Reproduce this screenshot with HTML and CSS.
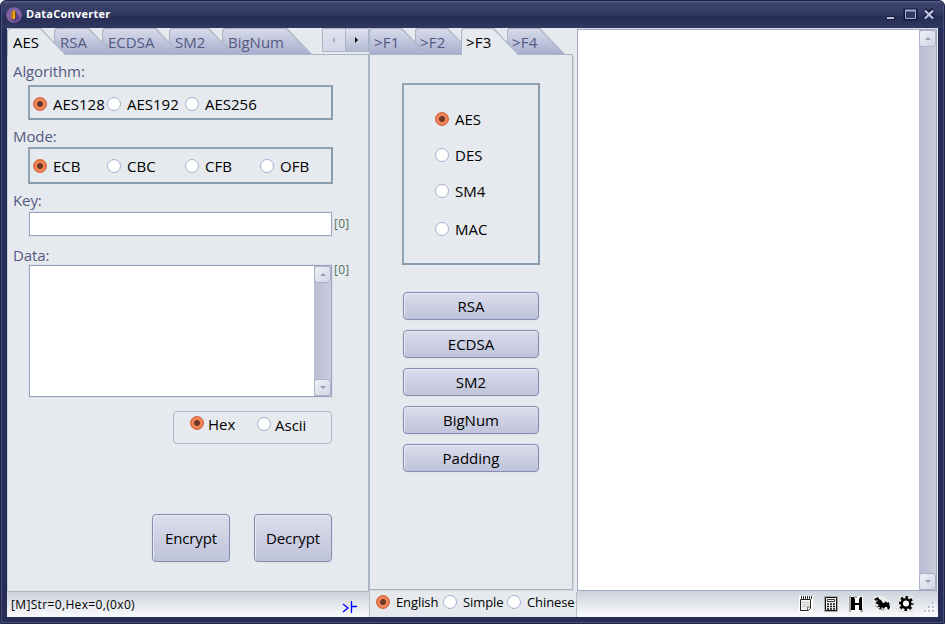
FILE: index.html
```html
<!DOCTYPE html>
<html lang="en">
<head>
    <meta charset="UTF-8">
    <title>DataConverter</title>
    <link rel="stylesheet" href="styles.css">
</head>
<body>
    <div class="window">
        <header class="titlebar">
            <svg class="logo" width="16" height="16" viewBox="0 0 16 16">
                <circle cx="8" cy="8" r="7.8" fill="#8262a4"/>
                <path d="M9 4l5 7-5 4-5-3z" fill="#56418a"/>
                <path d="M5 5l2-1v8H5z" fill="#b87b16"/>
                <path d="M7 4l2-1v9H7z" fill="#f0a51e"/>
                <path d="M9 4l1 1v6l-1 1z" fill="#654916"/>
            </svg>
            <span class="title">DataConverter</span>
            <svg class="controls" width="56" height="16" viewBox="0 0 56 16">
                <g fill="none" stroke="#151b3d" stroke-width="4">
                    <path d="M3 11h8M21.500 3.500h10v8h-10zM41 2.500l8 8M49 2.500l-8 8"/>
                </g>
                <path d="M3 11h7" stroke="#b9bfdc" stroke-width="2"/>
                <path d="M21.500 3.500h10v8h-10z" fill="#303961" stroke="#a9afd0"/>
                <path d="M21 3.500h11" stroke="#a9afd0" stroke-width="2"/>
                <path d="M41 3.500l8 8M49 3.500l-8 8" stroke="#c1c6df" stroke-width="2.200"/>
            </svg>
        </header>

        <main class="content">
            <section class="left">
                <nav class="tabs">
                    <div class="tab active w47"><span>AES</span></div>
                    <div class="tab w48"><span>RSA</span></div>
                    <div class="tab w67"><span>ECDSA</span></div>
                    <div class="tab w53"><span>SM2</span></div>
                    <div class="tab w78"><span>BigNum</span></div>
                    <div class="tab-scroll">
                        <i class="arrow prev"></i>
                        <i class="arrow next"></i>
                    </div>
                </nav>
                <div class="form">
                    <div class="label">Algorithm:</div>
                    <div class="group algorithm">
                        <div class="radio checked">AES128</div>
                        <div class="radio">AES192</div>
                        <div class="radio">AES256</div>
                    </div>
                    <div class="label mode-label">Mode:</div>
                    <div class="group mode">
                        <div class="radio checked">ECB</div>
                        <div class="radio">CBC</div>
                        <div class="radio">CFB</div>
                        <div class="radio">OFB</div>
                    </div>
                    <div class="label key-label">Key:</div>
                    <div class="field-row">
                        <div class="field key"></div>
                        <span class="count">[0]</span>
                    </div>
                    <div class="label data-label">Data:</div>
                    <div class="field-row data-row">
                        <div class="field data">
                            <div class="scrollbar"><b class="up"></b><b class="down"></b></div>
                        </div>
                        <span class="count">[0]</span>
                    </div>
                    <div class="format">
                        <div class="radio checked">Hex</div>
                        <div class="radio ascii">Ascii</div>
                    </div>
                    <div class="actions">
                        <div class="button">Encrypt</div>
                        <div class="button">Decrypt</div>
                    </div>
                </div>
                <footer class="status">
                    <span>[M]Str=0,Hex=0,(0x0)</span>
                    <svg width="16" height="14" viewBox="0 0 16 14" fill="none" stroke="#0000ff" stroke-width="1.3">
                        <path d="M1 4l5 4-5 4M9.500 1v12M10 6.500h5"/>
                    </svg>
                </footer>
            </section>

            <section class="middle">
                <nav class="tabs">
                    <div class="tab w46"><span>&gt;F1</span></div>
                    <div class="tab w46"><span>&gt;F2</span></div>
                    <div class="tab active w46"><span>&gt;F3</span></div>
                    <div class="tab w46"><span>&gt;F4</span></div>
                </nav>
                <div class="tools">
                    <div class="group ciphers">
                        <div class="radio checked">AES</div>
                        <div class="radio">DES</div>
                        <div class="radio">SM4</div>
                        <div class="radio mac">MAC</div>
                    </div>
                    <div class="tool-buttons">
                        <div class="button">RSA</div>
                        <div class="button">ECDSA</div>
                        <div class="button">SM2</div>
                        <div class="button">BigNum</div>
                        <div class="button">Padding</div>
                    </div>
                </div>
                <footer class="language">
                    <div class="radio checked">English</div>
                    <div class="radio">Simple</div>
                    <div class="radio">Chinese</div>
                </footer>
            </section>

            <section class="right">
                <div class="output">
                    <div class="scrollbar"><b class="up"></b><b class="down"></b></div>
                </div>
                <footer class="toolbar">
                    <svg width="16" height="16" viewBox="0 0 16 16">
                        <path d="M0 0h14v16H0z" fill="#fff"/>
                        <path d="M1.500 3.500h10v9l-2 2h-8z" fill="#f4f4f4" stroke="#222"/>
                        <path d="M2 1.500h11" stroke="#111" stroke-width="2.500" stroke-dasharray="1 1"/>
                        <path d="M3 6.500h7M3 8.500h7M3 10.500h7" stroke="#c6c6c6"/>
                        <path d="M8.500 14v-3h3" fill="none" stroke="#777"/>
                    </svg>
                    <svg width="16" height="16" viewBox="0 0 16 16">
                        <path d="M0 0h14v16H0z" fill="#aaa"/>
                        <path d="M1.500 1.500h11v13h-11z" fill="#f2f2f2" stroke="#111"/>
                        <path d="M3.500 3.500h7v2h-7z" fill="#fff" stroke="#333"/>
                        <path d="M3 8h8M3 10.500h8M3 13h8" stroke="#111" stroke-width="1.600" stroke-dasharray="2 1"/>
                    </svg>
                    <svg width="16" height="16" viewBox="0 0 16 16">
                        <path d="M0 0h14v16H0z" fill="#fff"/>
                        <path d="M0 0h2v16H0zM11 13h3v3h-3zM5 0h3v2H5z" fill="#aaa"/>
                        <path d="M2 1h3v1.500h1V7h4V2.500h1V1h2v13h-3V9H6v5H2z" fill="#000"/>
                    </svg>
                    <svg width="16" height="16" viewBox="0 0 16 16">
                        <path d="M0 0h8l8 5v11H6L0 10z" fill="#eee"/>
                        <path d="M0 3l2-1 2-1 1 2 2 1 2 3 1 0 2-2 1 2 2-1 1 6-2 2-1-3-2 0-1 2-2-2-1 3-2-1 1-2-3 0 2-2-4-2 2-1z" fill="#000"/>
                        <path d="M1 9l4 4 5 1M2 4l2 1" stroke="#999" fill="none"/>
                    </svg>
                    <svg width="16" height="16" viewBox="0 0 16 16">
                        <path d="M0 0h14v16H0z" fill="#e4e4e4"/>
                        <circle cx="7" cy="7.500" r="5.800" fill="none" stroke="#000" stroke-width="3.400" stroke-dasharray="2.278 2.278" stroke-dashoffset="1.100"/>
                        <circle cx="7" cy="7.500" r="4.300" fill="#fff" stroke="#000" stroke-width="2.500"/>
                    </svg>
                    <svg class="grip" width="12" height="12" viewBox="0 0 12 12">
                        <path d="M8 0h3v3H8zM4 4h3v3H4zM8 4h3v3H8zM0 8h3v3H0zM4 8h3v3H4zM8 8h3v3H8z" fill="#fff"/>
                        <path d="M8 0h2v2H8zM4 4h2v2H4zM8 4h2v2H8zM0 8h2v2H0zM4 8h2v2H4zM8 8h2v2H8z" fill="#b9c0d2"/>
                    </svg>
                </footer>
            </section>
        </main>
    </div>
</body>
</html>
```
FILE: styles.css
```css
*,
*::before,
*::after {
    box-sizing: border-box;
}

body {
    margin: 0;
    background: #fff;
    color: #000;
    font-family: "Open Sans", "Noto Sans", sans-serif;
    font-size: 15px;
}

.window {
    width: 945px;
    height: 624px;
    padding: 0 6px 6px;
    background: #262e57;
    border: 1px solid #1c2347;
    border-radius: 6px 6px 0 0;
    box-shadow: inset 0 0 0 1px #464f7c;
}

.titlebar {
    display: flex;
    align-items: center;
    height: 27px;
    margin: 0 -5px;
    padding: 0 3px 0 4px;
    background: linear-gradient(#565e87, #384069 3px, #363e67 10px, #262e57 17px, #30385f);
    border-radius: 5px 5px 0 0;
}

.title {
    flex: 1;
    margin: -2px 0 0 4px;
    color: #fff;
    font-size: 11px;
    font-weight: bold;
    letter-spacing: 0.25px;
}

.content {
    display: grid;
    grid-template-columns: 362px 208px 361px;
    height: 589px;
    background: #e6eaef;
}

.left,
.middle,
.right {
    display: flex;
    flex-direction: column;
}

/* slanted tabs, each one overlaps the next */
.tabs {
    display: flex;
    position: relative;
    z-index: 0;
    height: 27px;
    flex: none;
    border-bottom: 1px solid #a9b5c3;
}

.tab {
    position: relative;
    height: 26px;
    color: #535a7f;
    line-height: 28px;
}

.tab span {
    position: relative;
    z-index: 2;
    margin-left: 6px;
}

.tab::before,
.tab::after {
    content: "";
    position: absolute;
    top: 0;
    left: 0;
    right: -12px;
    bottom: 0;
    background: #a9b5c3;
    clip-path: polygon(0 2px, 2px 0, calc(100% - 25px) 0, 100% 100%, 0 100%);
}

.tab::after {
    top: 1px;
    left: 1px;
    right: -11px;
    background: linear-gradient(#d7daea, #a9b0d0);
}

.tab:nth-child(1) { z-index: 5; }
.tab:nth-child(2) { z-index: 4; }
.tab:nth-child(3) { z-index: 3; }
.tab:nth-child(4) { z-index: 2; }
.tab:nth-child(5) { z-index: 1; }

.tab.active {
    z-index: 6;
    height: 27px;
    color: #000;
}

.tab.active::after {
    background: #e6eaef;
}

.w46 { width: 46px; }
.w47 { width: 47px; }
.w48 { width: 48px; }
.w53 { width: 53px; }
.w67 { width: 67px; }
.w78 { width: 78px; }

.tab-scroll {
    display: flex;
    width: 47px;
    height: 24px;
    margin-left: auto;
    border: 1px solid #a9b5c3;
}

.arrow {
    display: flex;
    flex: 1;
    align-items: center;
    justify-content: center;
    padding-right: 1px;
    background: linear-gradient(#e1e4ef, #d2d6e7);
}

.arrow::before {
    content: "";
    border: 3px solid transparent;
}

.prev::before {
    border-right-color: #a3afbf;
    border-left: 0;
}

.next {
    background: linear-gradient(#dfe2ef, #b4bad5);
    border-left: 1px solid #a9b5c3;
}

.next::before {
    border-left-color: #000;
    border-right: 0;
}

.form {
    flex: 1;
    padding: 7px 0 0 21px;
    border-left: 1px solid #c3cbd6;
    border-right: 2px solid #a9b5c3;
    margin-right: -1px;
}

.label {
    height: 18px;
    margin-left: -16px;
    color: #535a7f;
    letter-spacing: -0.1px;
    line-height: 18px;
}

.group {
    border: 2px solid #91a2b3;
    border-right-color: #8b9bae;
    border-bottom-color: #8b9bae;
}

.algorithm,
.mode {
    display: grid;
    grid-template-columns: 74px 78px 75px 1fr;
    align-items: center;
    width: 305px;
    margin-left: -1px;
    padding-left: 3px;
}

.algorithm {
    height: 35px;
    margin-top: 5px;
    padding-top: 2px;
}

.mode-label { margin-top: 7px; }

.mode {
    height: 37px;
    margin-top: 2px;
    padding-top: 1px;
}

.key-label { margin-top: 7px; }

.radio {
    display: flex;
    align-items: center;
    height: 20px;
    line-height: 20px;
    white-space: nowrap;
}

.radio::before {
    content: "";
    flex: none;
    width: 14px;
    height: 14px;
    margin-right: 6px;
    background: #fff;
    border: 1px solid #a9afd2;
    border-radius: 50%;
}

.radio.checked::before {
    background: radial-gradient(circle, #6c3928 0 2.5px, #f38459 3.5px 5px, #e9703f 6px);
    border-color: #cf653f;
}

.field-row {
    display: flex;
    gap: 2px;
    margin-top: 3px;
}

.field {
    width: 303px;
    background: #fff;
    border: 1px solid #9ca3bf;
    box-shadow: 0 0 0 1px #dce0e9;
}

.key { height: 24px; }

.count {
    color: #53705b;
    font-size: 12px;
    letter-spacing: 0.2px;
    line-height: 24px;
}

.data-label { margin-top: 10px; }

.data-row { margin-top: 1px; }

.data {
    display: flex;
    justify-content: flex-end;
    height: 132px;
}

.data-row .count { line-height: 10px; }

.scrollbar {
    display: flex;
    flex-direction: column;
    justify-content: space-between;
    width: 17px;
    background: linear-gradient(90deg, #b9bdd2, #cbcddd);
}

.scrollbar b {
    display: flex;
    align-items: center;
    justify-content: center;
    height: 17px;
    background: linear-gradient(135deg, #eff1f7, #d2d5e3);
    border: 1px solid #adb2ca;
    border-radius: 3px;
}

.scrollbar b::before {
    content: "";
    border: 3px solid transparent;
}

.scrollbar .up::before {
    border-bottom-color: #989fb9;
    border-top: 0;
}

.scrollbar .down::before {
    border-top-color: #8f98b6;
    border-bottom: 0;
}

.format {
    display: flex;
    width: 159px;
    height: 33px;
    margin: 14px 0 0 144px;
    padding: 2px 0 0 16px;
    border: 1px solid #afb5ca;
    border-radius: 4px;
}

.format .radio { width: 67px; }

.format .radio::before {
    margin: -2px 4px 0 0;
}

.format .ascii { padding-top: 2px; }

.actions {
    display: flex;
    gap: 24px;
    margin: 70px 0 0 123px;
}

.button {
    display: flex;
    align-items: center;
    justify-content: center;
    background: linear-gradient(#dcdeed, #cdd0e2 50%, #c0c4da);
    border: 1px solid #858cb2;
    border-radius: 4px;
    box-shadow: inset 1px 1px 0 #e7e9f3, 0 0 0 1px #dfe3ea;
}

.actions .button {
    width: 78px;
    height: 48px;
    padding-bottom: 1px;
    letter-spacing: -0.1px;
}

.status {
    display: flex;
    justify-content: space-between;
    height: 26px;
    padding: 0 11px 0 4px;
    background: linear-gradient(#cdd3dc, #fafbfc);
    border-top: 1px solid #a9b5c3;
    font-size: 12px;
    letter-spacing: 0.35px;
    line-height: 26px;
}

.status svg { margin-top: 8px; }

.middle .tabs { width: 204px; }

.middle .tab span {
    margin-left: 5px;
    letter-spacing: 0.2px;
}

.tools {
    width: 204px;
    height: 535px;
    padding: 28px 0 0 33px;
    border-right: 1px solid #a9b5c3;
    border-bottom: 1px solid #a9b5c3;
    box-shadow: 1px 1px 0 #d1d7dd;
}

.ciphers {
    display: flex;
    flex-direction: column;
    gap: 16px;
    width: 138px;
    height: 182px;
    padding: 24px 0 0 31px;
}

.mac { margin-top: 2px; }

.tool-buttons {
    display: flex;
    flex-direction: column;
    gap: 10px;
    width: 136px;
    margin: 27px 0 0 1px;
}

.tool-buttons .button { height: 28px; }

.language {
    display: grid;
    grid-template-columns: 67px 64px 1fr;
    margin-top: 2px;
    height: 25px;
    padding-left: 6px;
    border-left: 1px solid #b4bec9;
    border-right: 1px solid #b4bec9;
    font-size: 13px;
    letter-spacing: -0.1px;
}

.output {
    display: flex;
    justify-content: flex-end;
    width: 360px;
    height: 562px;
    margin-top: 1px;
    background: #fff;
    border: 1px solid #a3a9c3;
    box-shadow: 0 -1px 0 #dce0ea;
}

.toolbar {
    display: flex;
    gap: 9px;
    height: 26px;
    padding: 5px 2px 0 222px;
    background: linear-gradient(#cdd3dc, #fafbfc);
}

.toolbar .grip {
    margin: 6px 0 0 auto;
}
```
